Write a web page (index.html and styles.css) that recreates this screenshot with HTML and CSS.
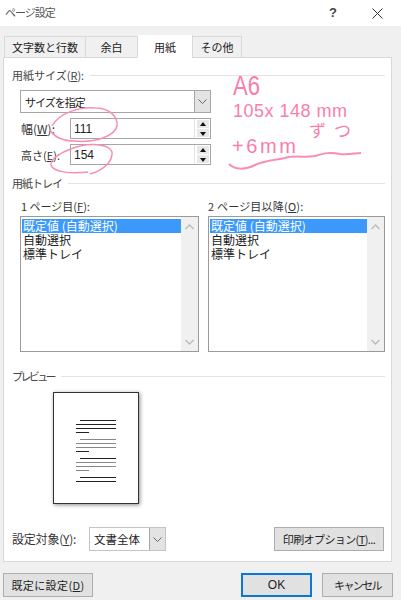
FILE: index.html
```html
<!DOCTYPE html>
<html lang="ja">
<head>
  <meta charset="UTF-8" />
  <title>ページ設定</title>
  <link rel="stylesheet" href="styles.css">
</head>
<body>
  <div class="titlebar">
    <span class="title">ページ設定</span>
    <span class="help">?</span>
    <svg class="close" width="11" height="11" viewBox="0 0 11 11"><path d="M0.5 0.5 L10.5 10.5 M10.5 0.5 L0.5 10.5" stroke="#333" stroke-width="1" fill="none"/></svg>
  </div>

  <div class="tabs">
    <div class="tab tab-1">文字数と行数</div>
    <div class="tab tab-2">余白</div>
    <div class="tab tab-3 tab-active">用紙</div>
    <div class="tab tab-4">その他</div>
  </div>

  <div class="panel">
    <div class="legend"><span>用紙サイズ(<u>R</u>):</span><i></i></div>

    <div class="select size-select">
      <span class="select-text">サイズを指定</span>
      <span class="select-arrow"><svg width="9" height="5" viewBox="0 0 9 5"><path d="M0.5 0.5 L4.5 4.5 L8.5 0.5" stroke="#666" fill="none"/></svg></span>
    </div>

    <div class="field width-field">
      <label>幅(<u>W</u>):</label>
      <div class="spin-input">
        <span class="spin-value">111</span>
        <span class="spin"><b class="up"></b><b class="down"></b></span>
      </div>
    </div>
    <div class="field height-field">
      <label>高さ(<u>E</u>):</label>
      <div class="spin-input">
        <span class="spin-value">154</span>
        <span class="spin"><b class="up"></b><b class="down"></b></span>
      </div>
    </div>

    <div class="legend tray-legend"><span>用紙トレイ</span><i></i></div>

    <div class="trays">
      <div class="tray tray-first">
        <div class="tray-label">1 ページ目(<u>F</u>):</div>
        <div class="listbox">
          <div class="list-items">
            <div class="list-item selected">既定値 (自動選択)</div>
            <div class="list-item">自動選択</div>
            <div class="list-item">標準トレイ</div>
          </div>
          <div class="scrollbar">
            <svg width="9" height="6" viewBox="0 0 9 6"><path d="M0.5 5 L4.5 1 L8.5 5" stroke="#bbb" stroke-width="1.4" fill="none"/></svg>
            <svg width="9" height="6" viewBox="0 0 9 6"><path d="M0.5 1 L4.5 5 L8.5 1" stroke="#bbb" stroke-width="1.4" fill="none"/></svg>
          </div>
        </div>
      </div>
      <div class="tray tray-second">
        <div class="tray-label">2 ページ目以降(<u>O</u>):</div>
        <div class="listbox">
          <div class="list-items">
            <div class="list-item selected">既定値 (自動選択)</div>
            <div class="list-item">自動選択</div>
            <div class="list-item">標準トレイ</div>
          </div>
          <div class="scrollbar">
            <svg width="9" height="6" viewBox="0 0 9 6"><path d="M0.5 5 L4.5 1 L8.5 5" stroke="#bbb" stroke-width="1.4" fill="none"/></svg>
            <svg width="9" height="6" viewBox="0 0 9 6"><path d="M0.5 1 L4.5 5 L8.5 1" stroke="#bbb" stroke-width="1.4" fill="none"/></svg>
          </div>
        </div>
      </div>
    </div>

    <div class="legend preview-legend"><span>プレビュー</span><i></i></div>

    <div class="preview-page">
      <div class="line-group"><p class="indent"></p><p></p><p></p><p class="short"></p></div>
      <div class="line-group"><p class="indent gray"></p><p class="gray"></p><p class="gray"></p><p class="short"></p></div>
      <div class="line-group"><p class="indent"></p><p class="gray"></p><p class="gray"></p><p class="short gray"></p></div>
      <div class="line-group"><p class="indent"></p><p></p></div>
    </div>

    <div class="apply-row">
      <span class="apply-label">設定対象(<u>Y</u>):</span>
      <div class="select apply-select">
        <span class="select-text">文書全体</span>
        <span class="select-arrow"><svg width="9" height="5" viewBox="0 0 9 5"><path d="M0.5 0.5 L4.5 4.5 L8.5 0.5" stroke="#666" fill="none"/></svg></span>
      </div>
      <button class="btn print-btn">印刷オプション(<u>T</u>)...</button>
    </div>
  </div>

  <div class="footer">
    <button class="btn default-btn">既定に設定(<u>D</u>)</button>
    <button class="btn ok-btn">OK</button>
    <button class="btn cancel-btn">キャンセル</button>
  </div>

  <!-- pink pen notes written over the dialog -->
  <svg class="notes" width="401" height="600" viewBox="0 0 401 600">
    <text x="233" y="95" font-size="27" textLength="27" lengthAdjust="spacingAndGlyphs">A6</text>
    <text x="233" y="117" font-size="18" textLength="114" lengthAdjust="spacing">105x 148 mm</text>
    <text x="232" y="153" font-size="20" textLength="64" lengthAdjust="spacing">+6mm</text>
    <text x="309" y="137" font-size="17" textLength="42" lengthAdjust="spacing">ずつ</text>
    <path d="M52 126 C60 112 80 107 95 108 C110 108 118 117 117 126 C115 136 95 143 75 141 C65 141 55 138 50 130" />
    <path d="M90 174 C105 170 113 160 112 152 C110 145 95 143 80 146 C65 150 50 158 51 165 C53 172 70 174 88 172" />
    <path class="wave" d="M229 164 C235 170 245 170 255 165 C265 160 275 160 285 158 C295 155 305 158 315 156 C325 153 330 152 340 154 C350 155 355 153 361 153" />
  </svg>
</body>
</html>
```

FILE: styles.css
```css
* {
  box-sizing: border-box;
}
body {
  margin: 0;
  width: 401px;
  height: 600px;
  overflow: hidden;
  position: relative;
  background-color: #f0f0f0;
  color: #222;
  font-family: "Noto Sans CJK JP", "Noto Sans", sans-serif;
  font-size: 11px;
  line-height: 14px;
}
u {
  text-underline-offset: 1px;
}

.titlebar {
  height: 26px;
  background: white;
  display: flex;
  align-items: center;
  padding-left: 5px;
}
.title {
  font-size: 11px;
  letter-spacing: -1px;
  color: #555;
  flex: 1;
  margin-top: -3px;
}
.help {
  font-family: "Liberation Sans", sans-serif;
  font-weight: bold;
  font-size: 13px;
  color: #444;
  margin-right: 35px;
}
.close {
  margin-right: 18px;
}

.tabs {
  display: flex;
  height: 23px;
  margin-top: 8px;
  padding-left: 4px;
  align-items: flex-end;
  position: relative;
  z-index: 1;
}
.tab {
  height: 21px;
  border: 1px solid #d9d9d9;
  border-bottom: none;
  border-left: none;
  display: flex;
  align-items: center;
  justify-content: center;
  font-size: 11px;
}
.tab-1 { width: 82px; border-left: 1px solid #d9d9d9; }
.tab-2 { width: 52px; }
.tab-3 { width: 55px; }
.tab-4 { width: 49px; }
.tab-active {
  height: 23px;
  background: white;
  margin-bottom: -1px;
  border-top: none;
}

.panel {
  width: 389px;
  height: 505px;
  margin-left: 3px;
  padding: 9px 6px 0 8px;
  background: white;
  border: 1px solid #d9d9d9;
}
.legend {
  display: flex;
  align-items: center;
  height: 16px;
  color: #444;
}
.legend i {
  flex: 1;
  height: 1px;
  background: #e3e3e3;
  margin-left: 6px;
}

.select {
  display: flex;
  border: 1px solid #a6a6a6;
  background: white;
}
.select-text {
  flex: 1;
  padding-left: 4px;
  align-self: center;
}
.select-arrow {
  width: 16px;
  background: #e3e3e3;
  border-left: 1px solid #a6a6a6;
  display: flex;
  align-items: center;
  justify-content: center;
}
.size-select {
  width: 191px;
  height: 23px;
  margin: 7px 0 0 8px;
}
.size-select .select-text {
  letter-spacing: -1px;
}

.field {
  display: flex;
  align-items: center;
  margin-left: 9px;
}
.field label {
  width: 49px;
  color: #333;
}
.width-field label {
  font-size: 12px;
}
.width-field { margin-top: 5px; }
.height-field { margin-top: 5px; }
.spin-input {
  width: 141px;
  height: 21px;
  display: flex;
  border: 1px solid #a6a6a6;
  padding-left: 3px;
}
.spin-value {
  flex: 1;
  align-self: center;
  font-family: "Liberation Sans", sans-serif;
  font-size: 12px;
}
.spin {
  width: 16px;
  display: flex;
  flex-direction: column;
  gap: 1px;
  padding: 1px 1px 1px 2px;
  border-left: 1px solid #e3e3e3;
}
.spin b {
  flex: 1;
  background: #e8e8e8;
  position: relative;
}
.spin b::after {
  content: "";
  position: absolute;
  left: 3px;
  border-left: 3.5px solid transparent;
  border-right: 3.5px solid transparent;
}
.spin .up::after {
  top: 2px;
  border-bottom: 4px solid #111;
}
.spin .down::after {
  top: 3px;
  border-top: 4px solid #111;
}

.tray-legend { margin-top: 10px; }
.tray-legend span {
  letter-spacing: -1px;
}
.trays {
  display: flex;
  gap: 9px;
  margin: 8px 0 0 8px;
}
.tray-first { width: 179px; }
.tray-second { width: 177px; }
.tray-label {
  height: 17px;
  padding-left: 1px;
  color: #333;
}
.tray-second .tray-label {
  padding-left: 0;
  letter-spacing: 0.2px;
}
.listbox {
  height: 136px;
  border: 1px solid #9a9a9a;
  display: flex;
  padding: 2px 0 0 1px;
}
.list-items {
  flex: 1;
  font-size: 12px;
}
.list-item {
  height: 14px;
  line-height: 14px;
  padding-left: 1px;
  white-space: nowrap;
  color: #222;
}
.selected {
  background: #3b99fc;
  color: white;
}
.scrollbar {
  width: 17px;
  margin-top: -2px;
  background: #f0f0f0;
  display: flex;
  flex-direction: column;
  justify-content: space-between;
  align-items: center;
  padding: 7px 0 6px;
}

.preview-legend { margin-top: 16px; }
.preview-legend span {
  letter-spacing: -2.6px;
}
.preview-legend i {
  margin-left: 7px;
}
.preview-page {
  width: 86px;
  height: 112px;
  margin: 8px 0 0 41px;
  padding: 27px 0 0 22px;
  border: 1px solid #333;
  background: white;
  box-shadow: 1px 1px 4px rgba(0,0,0,0.45);
}
.line-group {
  height: 19px;
  width: 40px;
}
.line-group p {
  height: 1px;
  margin: 0 0 3px;
  background: #222;
}
.line-group .indent { margin-left: 4px; }
.line-group .short { width: 13px; }
.line-group .gray { background: #888; }

.apply-row {
  display: flex;
  align-items: center;
  margin-top: 23px;
}
.apply-label {
  width: 77px;
  font-size: 12px;
  letter-spacing: -0.2px;
  color: #333;
}
.apply-select {
  width: 77px;
  height: 24px;
  border-color: #c4c4c4;
  font-size: 11.5px;
}
.btn {
  height: 24px;
  padding: 0;
  border: 1px solid #adadad;
  background: #e1e1e1;
  color: #222;
  font-family: inherit;
  font-size: 11px;
  line-height: 14px;
}
.print-btn {
  width: 110px;
  margin-left: auto;
  margin-right: 1px;
  letter-spacing: -0.6px;
}

.footer {
  display: flex;
  margin-top: 11px;
  padding-left: 3px;
}
.default-btn {
  width: 90px;
  letter-spacing: 0.4px;
}
.ok-btn {
  width: 71px;
  margin-left: auto;
  border: 2px solid #0a78d7;
  font-family: "Liberation Sans", sans-serif;
  font-size: 12px;
}
.cancel-btn {
  width: 71px;
  margin: 0 8px 0 10px;
  letter-spacing: -1.6px;
}

.notes {
  position: absolute;
  left: 0;
  top: 0;
  pointer-events: none;
}
.notes text {
  fill: #fb7dab;
  font-family: "Liberation Sans", "Noto Sans CJK JP", sans-serif;
}
.notes path {
  fill: none;
  stroke: #fb8db5;
  stroke-width: 1.5;
}
.notes .wave {
  stroke-width: 2;
}
```
